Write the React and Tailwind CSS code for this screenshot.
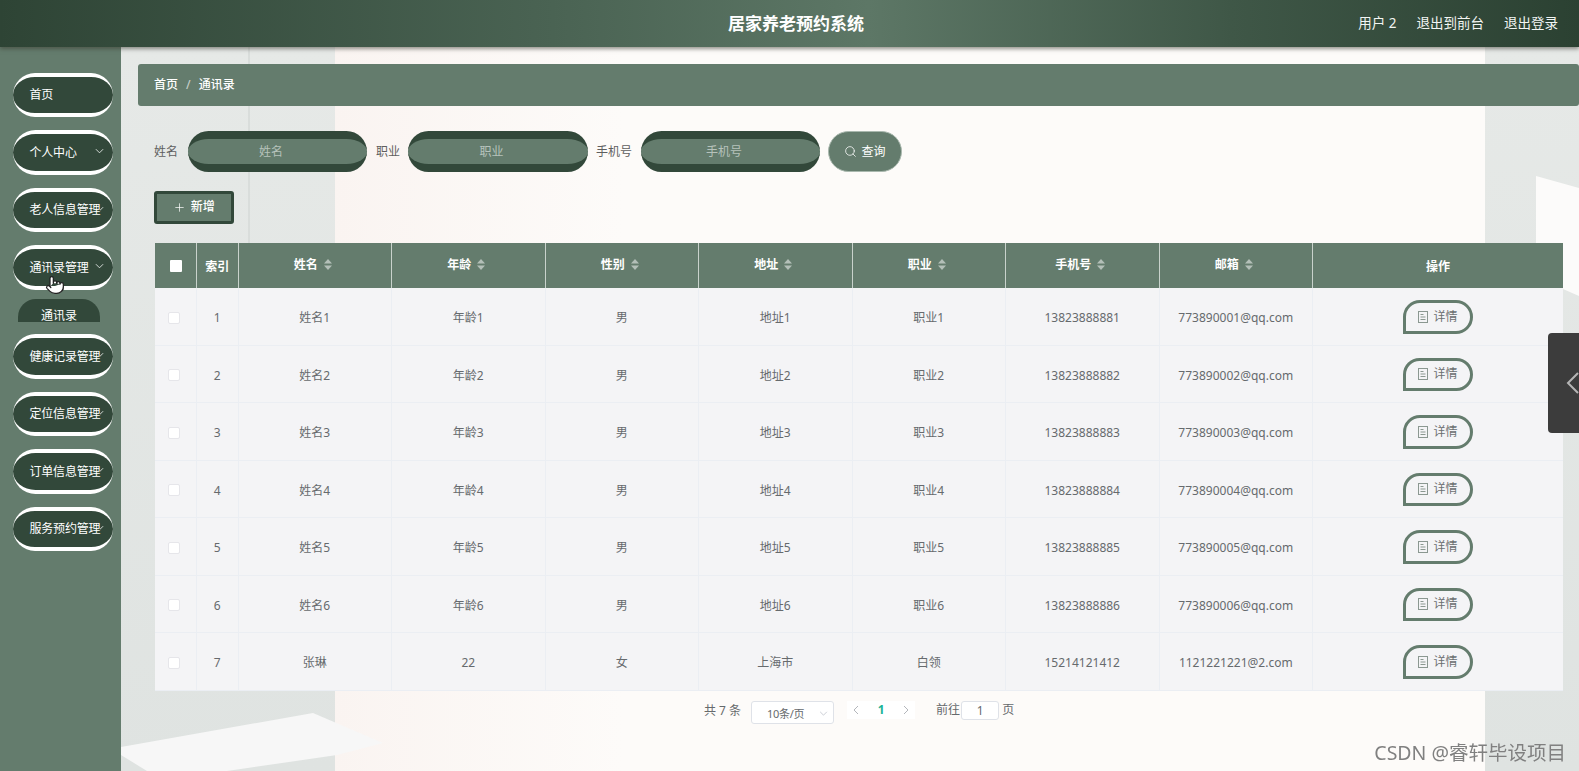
import React from "react";
import { Plus, Pointer, Search } from "lucide-react";

const menus = [
  { name: "首页" },
  { name: "个人中心", arrow: true },
  { name: "老人信息管理", arrow: true },
  { name: "通讯录管理", arrow: true, children: ["通讯录"] },
  { name: "健康记录管理", arrow: true },
  { name: "定位信息管理", arrow: true },
  { name: "订单信息管理", arrow: true },
  { name: "服务预约管理", arrow: true },
];

const columns = ["姓名", "年龄", "性别", "地址", "职业", "手机号", "邮箱"];

const rows = [
  ["姓名1", "年龄1", "男", "地址1", "职业1", "13823888881", "773890001@qq.com"],
  ["姓名2", "年龄2", "男", "地址2", "职业2", "13823888882", "773890002@qq.com"],
  ["姓名3", "年龄3", "男", "地址3", "职业3", "13823888883", "773890003@qq.com"],
  ["姓名4", "年龄4", "男", "地址4", "职业4", "13823888884", "773890004@qq.com"],
  ["姓名5", "年龄5", "男", "地址5", "职业5", "13823888885", "773890005@qq.com"],
  ["姓名6", "年龄6", "男", "地址6", "职业6", "13823888886", "773890006@qq.com"],
  ["张琳", "22", "女", "上海市", "白领", "15214121412", "1121221221@2.com"],
];

function Chevron({ className }) {
  return (
    <svg viewBox="0 0 10 6" className={className} fill="none" stroke="currentColor" strokeWidth="1">
      <polyline points="1,1 5,5 9,1" />
    </svg>
  );
}

function SortCaret() {
  return (
    <svg width="8" height="11" viewBox="0 0 8 11" className="shrink-0 text-[#b3bfb8]" fill="currentColor">
      <polygon points="4,0 8,4.5 0,4.5" />
      <polygon points="0,6.5 8,6.5 4,11" />
    </svg>
  );
}

function DocIcon() {
  return (
    <svg width="10" height="12" viewBox="0 0 10 12" fill="none" stroke="#8b9891" strokeWidth="1">
      <rect x="0.5" y="0.5" width="9" height="11" />
      <path d="M2.5 3.5h3M2.5 6h5M2.5 8.5h5" />
    </svg>
  );
}

function Backdrop() {
  return (
    <svg
      className="absolute inset-0"
      width="1458"
      height="724"
      viewBox="121 47 1458 724"
    >
      <defs>
        <linearGradient id="peach" x1="0" x2="1" y1="0" y2="0">
          <stop offset="0" stopColor="#faf4f1" />
          <stop offset="0.25" stopColor="#fdfbf9" />
          <stop offset="1" stopColor="#fdfbf9" />
        </linearGradient>
        <linearGradient id="gray" x1="0" x2="0" y1="0" y2="1">
          <stop offset="0" stopColor="#e6e9e7" />
          <stop offset="1" stopColor="#dfe3e1" />
        </linearGradient>
      </defs>
      <rect x="121" y="47" width="214" height="724" fill="url(#gray)" />
      <rect x="335" y="47" width="1150" height="724" fill="url(#peach)" />
      <rect x="1485" y="47" width="94" height="724" fill="url(#gray)" />
      <rect x="248" y="47" width="2" height="196" fill="#d9dddb" />
      <polygon points="1536,176 1579,188 1579,296 1563,289 1536,280" fill="#fcfbfa" />
      <polygon points="121,747 313,713 383,743 337,755 227,771 147,771 121,755" fill="#f7f7f7" />
    </svg>
  );
}

function SearchField({ label, labelClass, inputClass }) {
  return (
    <>
      <span className={labelClass}>{label}</span>
      <input
        placeholder={label}
        className={inputClass}
      />
    </>
  );
}

export default function App() {
  return (
    <div className="flex flex-col h-screen overflow-hidden font-['Noto_Sans','Noto_Sans_CJK_SC',sans-serif] text-xs">
      <header className="relative z-20 h-[47px] shrink-0 flex items-center bg-[linear-gradient(90deg,#2e4435_0%,#4a6353_35%,#5d7766_55%,#3f5747_78%,#2b4132_100%)] shadow-[0_2px_4px_rgba(60,60,50,0.55)] text-white">
        <h1 className="w-full pl-[13px] text-center text-[17px] leading-6 font-bold">居家养老预约系统</h1>
        <div className="absolute right-[21px] top-[13px] flex gap-[20px] text-[13.5px] leading-5 text-[#f2f5f3]">
          <span>用户 2</span>
          <span>退出到前台</span>
          <span>退出登录</span>
        </div>
      </header>

      <div className="flex flex-1 min-h-0">
        <aside className="relative w-[121px] shrink-0 bg-[#647c6d] pt-[25.5px] pl-[13px]">
          {menus.map((menu) => (
            <div key={menu.name} className="mb-[13px]">
              <div className="relative w-[100px] h-[44.5px] box-border flex items-center pl-[16.5px] rounded-[24px] border-y-[4px] border-white bg-[#32483a] text-white">
                <span className="relative z-10 pt-[1px] bg-[#32483a] leading-4 tracking-[-0.2px]">{menu.name}</span>
                {menu.arrow && (
                  <Chevron className="absolute left-[82px] top-[14px] w-[9px] h-[6px] text-[#e4e9e6]" />
                )}
              </div>
              {menu.children &&
                menu.children.map((child) => (
                  <div
                    key={child}
                    className="ml-[5px] mt-[9px] -mb-[0.5px] w-[82px] h-[23px] rounded-t-[18px] bg-[#32483a] text-white text-center leading-[34px]"
                  >
                    {child}
                  </div>
                ))}
            </div>
          ))}
          <Pointer
            size={20}
            fill="#fff"
            stroke="#222"
            strokeWidth={1.5}
            className="absolute left-[45px] top-[228px] z-20"
          />
        </aside>

        <main className="relative flex-1 min-w-0 pl-[17px] pt-[17px]">
          <Backdrop />
          <div className="relative">
            <div className="h-[41.5px] flex items-center pl-[16px] rounded-[3px] bg-[#647c6d] text-white font-medium">
              <span>首页</span>
              <span className="mx-[8px] text-[#c3ccc6]">/</span>
              <span>通讯录</span>
            </div>

            <div className="mt-[25.5px] ml-[16px] h-[41px] flex items-center text-[#5f5f5f]">
              <SearchField
                label="姓名"
                labelClass="w-[34px]"
                inputClass="w-[179px] h-[41px] box-border rounded-full border-y-[8px] border-[#32483a] bg-[#647c6d] pr-[13px] text-center text-xs text-white placeholder:text-[#b6c2bb] outline-none"
              />
              <SearchField
                label="职业"
                labelClass="w-[32px] ml-[9px]"
                inputClass="w-[180px] h-[41px] box-border rounded-full border-y-[8px] border-[#32483a] bg-[#647c6d] pr-[13px] text-center text-xs text-white placeholder:text-[#b6c2bb] outline-none"
              />
              <SearchField
                label="手机号"
                labelClass="w-[45px] ml-[8px]"
                inputClass="w-[179px] h-[41px] box-border rounded-full border-y-[8px] border-[#32483a] bg-[#647c6d] pr-[13px] text-center text-xs text-white placeholder:text-[#b6c2bb] outline-none"
              />
              <button className="ml-[8px] w-[74px] h-[41px] flex items-center justify-center gap-[4px] rounded-full border border-[#a9b8ae] bg-[#647c6d] text-white">
                <Search size={13} strokeWidth={1.4} />
                查询
              </button>
            </div>

            <button className="mt-[18.5px] ml-[16px] w-[79.5px] h-[33.5px] box-border flex items-center justify-center gap-[5px] rounded-[3px] border-[3.5px] border-[#32483a] bg-[#647c6d] text-white font-medium">
              <Plus size={13} strokeWidth={1.3} />
              新增
            </button>

            <div className="mt-[19px] ml-[17px] w-[1408px] grid grid-cols-[42px_41.5px_repeat(7,153.5px)_250px] text-[#666a6d]">
              <div className="h-[45px] flex items-center justify-center pl-[1px] bg-[#647c6d] border-r border-[#c9d2cc]">
                <span className="w-[12px] h-[12px] rounded-[1px] bg-white" />
              </div>
              <div className="h-[45px] flex items-center justify-center pt-[2px] bg-[#647c6d] border-r border-[#c9d2cc] text-white font-bold">
                索引
              </div>
              {columns.map((col) => (
                <div
                  key={col}
                  className="h-[45px] flex items-center justify-center gap-[6px] pr-[4px] pb-[2px] bg-[#647c6d] border-r border-[#c9d2cc] text-white font-bold"
                >
                  {col}
                  <SortCaret />
                </div>
              ))}
              <div className="h-[45px] flex items-center justify-center pt-[2px] bg-[#647c6d] text-white font-bold">
                操作
              </div>

              {rows.map((row, i) => (
                <React.Fragment key={i}>
                  <div className="h-[57.5px] flex items-center justify-center pr-[3px] pt-[3px] bg-[#f4f4f6] border-r border-b border-[#ebeef3]">
                    <span className="w-[12px] h-[12px] rounded-[2px] border border-[#e6e6ea] bg-white" />
                  </div>
                  <div className="h-[57.5px] flex items-center justify-center pt-[4px] bg-[#f4f4f6] border-r border-b border-[#ebeef3]">
                    {i + 1}
                  </div>
                  {row.map((cell, j) => (
                    <div
                      key={j}
                      className="h-[57.5px] flex items-center justify-center pt-[4px] bg-[#f4f4f6] border-r border-b border-[#ebeef3]"
                    >
                      {cell}
                    </div>
                  ))}
                  <div className="h-[57.5px] flex items-center justify-center pt-[1px] bg-[#f4f4f6] border-b border-[#ebeef3]">
                    <button className="w-[70.5px] h-[33.5px] box-border flex items-center justify-center gap-[5px] rounded-[18px] rounded-bl-none border-[3px] border-[#647c6d] text-[#6b6f71]">
                      <DocIcon />
                      详情
                    </button>
                  </div>
                </React.Fragment>
              ))}
            </div>

            <div className="mt-[10px] ml-[566px] h-[23px] flex items-start text-[#666a6d]">
              <span className="mt-[2px] leading-4 whitespace-nowrap">共 7 条</span>
              <div className="relative ml-[10px] w-[83px] h-[23px] box-border border border-[#dfe2e8] rounded-[3px] bg-white pl-[15px] text-[11px] tracking-[-0.3px] leading-[23px]">
                10条/页
                <Chevron className="absolute right-[5px] top-[9px] w-[9px] h-[5px] text-[#c0c4cc]" />
              </div>
              <div className="ml-[13px] w-[68px] h-[18.5px] flex items-center justify-between px-[4px] bg-white">
                <Chevron className="w-[10px] h-[6px] rotate-90 text-[#b3b6bb]" />
                <span className="font-bold text-[#19b394]">1</span>
                <Chevron className="w-[10px] h-[6px] -rotate-90 text-[#b3b6bb]" />
              </div>
              <span className="ml-[21px] mt-[1px] leading-4">前往</span>
              <div className="ml-[1px] w-[38px] h-[19px] box-border border border-[#dfe2e8] rounded-[3px] bg-white text-center leading-[17px]">
                1
              </div>
              <span className="ml-[3px] mt-[1px] leading-4">页</span>
            </div>
          </div>
        </main>
      </div>

      <div className="fixed right-0 top-[333px] z-30 w-[31px] h-[100px] rounded-l-[4px] bg-[#3c3c3c] flex items-center justify-end">
        <svg width="13" height="22" viewBox="0 0 13 22" fill="none" stroke="#b5b5b5" strokeWidth="2">
          <polyline points="12,1 2,11 12,21" />
        </svg>
      </div>

      <div className="fixed right-[13px] top-[741px] z-30 text-[19.5px] leading-6 text-[#808080] whitespace-nowrap">
        CSDN @睿轩毕设项目
      </div>
    </div>
  );
}
